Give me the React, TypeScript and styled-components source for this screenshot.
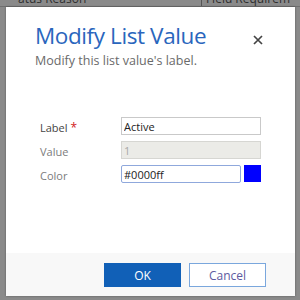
import React, { useState } from "react";
import styled, { createGlobalStyle } from "styled-components";

const GlobalStyle = createGlobalStyle`
  html, body {
    margin: 0;
    padding: 0;
    width: 300px;
    height: 300px;
    overflow: hidden;
    background: #8b8b8b;
    font-family: "Open Sans", "Noto Sans", sans-serif;
  }
`;

const Backdrop = styled.div`
  position: relative;
  width: 300px;
  height: 300px;
  background: #8a8a8a;
  overflow: hidden;
`;

const PageHeader = styled.div`
  display: flex;
  justify-content: space-between;
  height: 14px;
  margin-top: -8px;
  padding: 0 10px 0 14px;
  border-bottom: 1px solid #6f6f6f;
  font-size: 12px;
  line-height: 14px;
  color: #2e2e2e;
`;

const HeaderCell = styled.span<{ $divider?: boolean }>`
  padding-left: 4px;
  border-left: ${(p) => (p.$divider ? "1px solid #555" : "none")};
`;

const Dialog = styled.div`
  position: absolute;
  left: 6px;
  top: 7px;
  width: 289px;
  height: 289px;
  background: #ffffff;
  display: flex;
  flex-direction: column;
  box-shadow: 0 0 2px rgba(0, 0, 0, 0.35);
`;

const Header = styled.div`
  display: flex;
  justify-content: space-between;
  align-items: flex-start;
  padding: 14px 30px 0 29px;
`;

const Title = styled.h1`
  margin: 0;
  font-family: "Open Sans", "Noto Sans", sans-serif;
  font-weight: 400;
  font-size: 22.5px;
  line-height: 30px;
  letter-spacing: -0.4px;
  color: #2a66bd;
`;

const Subtitle = styled.p`
  margin: 2px 0 0 0;
  font-size: 12.5px;
  line-height: 16px;
  color: #6a6a6a;
`;

const CloseButton = styled.button`
  border: none;
  background: none;
  padding: 0;
  margin-top: 12px;
  width: 14px;
  height: 14px;
  display: flex;
  align-items: center;
  justify-content: center;
  cursor: pointer;
`;

const Form = styled.div`
  display: grid;
  grid-template-columns: 81px 1fr;
  grid-auto-rows: 18px;
  row-gap: 6px;
  padding: 48px 34px 0 34px;
  flex: 1;
  align-content: start;
`;

const FieldLabel = styled.label<{ $muted?: boolean }>`
  display: flex;
  align-items: center;
  height: 18px;
  font-size: 11px;
  line-height: 14px;
  color: ${(p) => (p.$muted ? "#7c7c7c" : "#444444")};
  padding-top: 4px;
  box-sizing: border-box;
`;

const Required = styled.span`
  color: #d01a1a;
  margin-left: 3px;
  font-size: 12px;
`;

const InputRow = styled.div`
  display: flex;
  gap: 3px;
`;

const TextInput = styled.input<{ $focused?: boolean }>`
  box-sizing: border-box;
  width: 100%;
  height: 18px;
  padding: 0 2px;
  font-family: "Open Sans", "Noto Sans", sans-serif;
  font-size: 11px;
  color: #222;
  background: #ffffff;
  border: 1px solid ${(p) => (p.$focused ? "#8fa8dc" : "#c9c9c9")};
  border-radius: ${(p) => (p.$focused ? "2px" : "0")};
  outline: none;

  &:disabled {
    background: #ebebe7;
    color: #a8a8a8;
    border-color: #d6d6d2;
  }
`;

const Swatch = styled.div<{ $color: string }>`
  flex: none;
  width: 17px;
  height: 17px;
  background: ${(p) => p.$color};
`;

const Footer = styled.div`
  display: flex;
  justify-content: flex-end;
  gap: 8px;
  height: 43px;
  padding: 10px 29px 0 0;
  box-sizing: border-box;
  background: #f8f8f8;
`;

const Button = styled.button<{ $primary?: boolean }>`
  width: 77px;
  height: 24px;
  box-sizing: border-box;
  font-family: "Open Sans", "Noto Sans", sans-serif;
  font-size: 12px;
  border: 1px solid ${(p) => (p.$primary ? "#1160b7" : "#7aa7dd")};
  background: ${(p) => (p.$primary ? "#1160b7" : "#ffffff")};
  color: ${(p) => (p.$primary ? "#ffffff" : "#5d5aa0")};
  cursor: pointer;
`;

const App: React.FC = () => {
  const [label, setLabel] = useState("Active");
  const [color, setColor] = useState("#0000ff");

  return (
    <>
      <GlobalStyle />
      <Backdrop>
        <PageHeader>
          <HeaderCell>atus Reason</HeaderCell>
          <HeaderCell $divider>Field Requirem</HeaderCell>
        </PageHeader>
        <Dialog>
          <Header>
            <div>
              <Title>Modify List Value</Title>
              <Subtitle>Modify this list value's label.</Subtitle>
            </div>
            <CloseButton aria-label="Close">
              <svg width="10" height="10" viewBox="0 0 10 10">
                <path
                  d="M1 1 L9 9 M9 1 L1 9"
                  stroke="#444"
                  strokeWidth="1.7"
                  fill="none"
                />
              </svg>
            </CloseButton>
          </Header>
          <Form>
            <FieldLabel>
              Label<Required>*</Required>
            </FieldLabel>
            <TextInput
              value={label}
              onChange={(e) => setLabel(e.target.value)}
            />
            <FieldLabel $muted>Value</FieldLabel>
            <TextInput value="1" disabled readOnly />
            <FieldLabel $muted>Color</FieldLabel>
            <InputRow>
              <TextInput
                $focused
                value={color}
                onChange={(e) => setColor(e.target.value)}
              />
              <Swatch $color={color} />
            </InputRow>
          </Form>
          <Footer>
            <Button $primary>OK</Button>
            <Button>Cancel</Button>
          </Footer>
        </Dialog>
      </Backdrop>
    </>
  );
};

export default App;
